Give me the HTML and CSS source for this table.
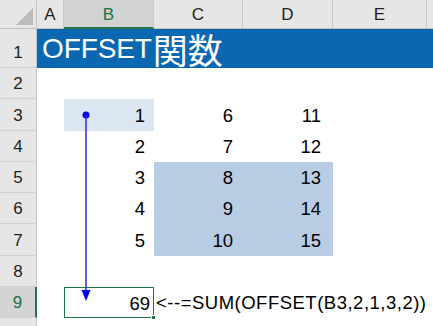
FILE: index.html
```html
<!DOCTYPE html>
<html lang="ja">
<head>
<meta charset="utf-8">
<title>OFFSET関数</title>
<link rel="stylesheet" href="styles.css">
</head>
<body>
<div class="sheet">
  <div class="corner"><span class="tri"></span></div>
  <div class="ch">A</div>
  <div class="ch sel">B</div>
  <div class="ch">C</div>
  <div class="ch">D</div>
  <div class="ch">E</div>
  <div class="ch last"></div>

  <div class="rh r1">1</div>
  <div class="title"><span class="lat">OFFSET</span><span class="kan">関数</span></div>

  <div class="rh">2</div>
  <div class="c"></div><div class="c"></div><div class="c"></div><div class="c"></div><div class="c"></div><div class="c"></div>

  <div class="rh">3</div>
  <div class="c"></div><div class="c num colb start">1</div><div class="c num">6</div><div class="c num cold">11</div><div class="c"></div><div class="c"></div>

  <div class="rh">4</div>
  <div class="c"></div><div class="c num colb">2</div><div class="c num">7</div><div class="c num cold">12</div><div class="c"></div><div class="c"></div>

  <div class="rh">5</div>
  <div class="c"></div><div class="c num colb">3</div><div class="c num area">8</div><div class="c num cold area">13</div><div class="c"></div><div class="c"></div>

  <div class="rh">6</div>
  <div class="c"></div><div class="c num colb">4</div><div class="c num area">9</div><div class="c num cold area">14</div><div class="c"></div><div class="c"></div>

  <div class="rh">7</div>
  <div class="c"></div><div class="c num colb">5</div><div class="c num area">10</div><div class="c num cold area">15</div><div class="c"></div><div class="c"></div>

  <div class="rh">8</div>
  <div class="c"></div><div class="c"></div><div class="c"></div><div class="c"></div><div class="c"></div><div class="c"></div>

  <div class="rh sel">9</div>
  <div class="c"></div><div class="c num active">69<span class="handle"></span></div><div class="c formula">&lt;--=SUM(OFFSET(B3,2,1,3,2))</div>

  <div class="rh"></div>
  <div class="c"></div><div class="c"></div><div class="c"></div><div class="c"></div><div class="c"></div><div class="c"></div>

  <svg class="arrow" width="20" height="200" viewBox="0 0 20 200">
    <circle cx="10" cy="4" r="3.5" fill="#0000ee"/>
    <line x1="10" y1="4" x2="10" y2="182" stroke="#2a2ae6" stroke-width="1.5"/>
    <polygon points="5.5,179 14.5,179 10,190" fill="#0000ee"/>
  </svg>
</div>
</body>
</html>
```

FILE: styles.css
```css
html, body {
  margin: 0;
  padding: 0;
  background: #ffffff;
}
body {
  font-family: "Liberation Sans", Arial, "Noto Sans CJK JP", sans-serif;
  color: #000;
  overflow: hidden;
}
.sheet {
  position: relative;
  display: grid;
  grid-template-columns: 37px 27px 90px 89px 90px 94px 6px;
  grid-template-rows: 29px 39px 31px 32px 31px 31px 31px 32px 31px 31px 20px;
  width: 433px;
  height: 326px;
  overflow: hidden;
}
.corner {
  position: relative;
  background: #e6e6e6;
  border-right: 1px solid #c4c4c4;
  border-bottom: 1px solid #c4c4c4;
  box-sizing: border-box;
}
.tri {
  position: absolute;
  right: 3px;
  bottom: 3px;
  width: 0;
  height: 0;
  border-left: 17px solid transparent;
  border-bottom: 17px solid #bcbcbc;
}
.ch {
  background: #e6e6e6;
  border-right: 1px solid #c8c8c8;
  border-bottom: 1px solid #c4c4c4;
  box-sizing: border-box;
  font-size: 17px;
  color: #222;
  display: flex;
  align-items: center;
  justify-content: center;
  padding-top: 2px;
}
.ch.sel {
  background: #d2d2d2;
  color: #217346;
  border-bottom: 2px solid #217346;
}
.ch.last {
  border-right: none;
}
.rh {
  background: #e6e6e6;
  border-right: 1px solid #c4c4c4;
  border-bottom: 1px solid #d2d2d2;
  box-sizing: border-box;
  font-size: 17px;
  color: #222;
  display: flex;
  align-items: flex-end;
  justify-content: center;
  padding-bottom: 4px;
}
.rh.sel {
  background: #d4d4d4;
  color: #217346;
  border-right: 2px solid #217346;
}
.title {
  grid-column: 2 / 8;
  background: #0a67b1;
  color: #fff;
  display: flex;
  align-items: center;
  padding-left: 5px;
  white-space: nowrap;
}
.lat {
  font-size: 28px;
  letter-spacing: -0.1px;
}
.kan {
  font-family: "Noto Sans CJK JP", sans-serif;
  font-size: 35px;
  line-height: 1;
  margin-left: 1px;
}
.c {
  position: relative;
  font-size: 18.5px;
  box-sizing: border-box;
}
.num {
  display: flex;
  align-items: flex-end;
  justify-content: flex-end;
  padding: 0 10px 4px 0;
}
.num.colb {
  padding-right: 9px;
}
.num.cold {
  padding-right: 12px;
}
.start {
  background: #dce6f2;
}
.area {
  background: #b8cce4;
}
.active {
  border: 1.5px solid #217346;
  padding: 0 3px 2px 0;
}
.handle {
  position: absolute;
  right: -3px;
  bottom: -3px;
  width: 5px;
  height: 5px;
  background: #217346;
  border: 1px solid #fff;
  box-sizing: border-box;
}
.formula {
  grid-column: 4 / 8;
  display: flex;
  align-items: flex-end;
  padding: 0 0 4px 2px;
  white-space: nowrap;
  font-size: 18.5px;
  letter-spacing: 0.5px;
}
.arrow {
  position: absolute;
  left: 76px;
  top: 111px;
}
```
